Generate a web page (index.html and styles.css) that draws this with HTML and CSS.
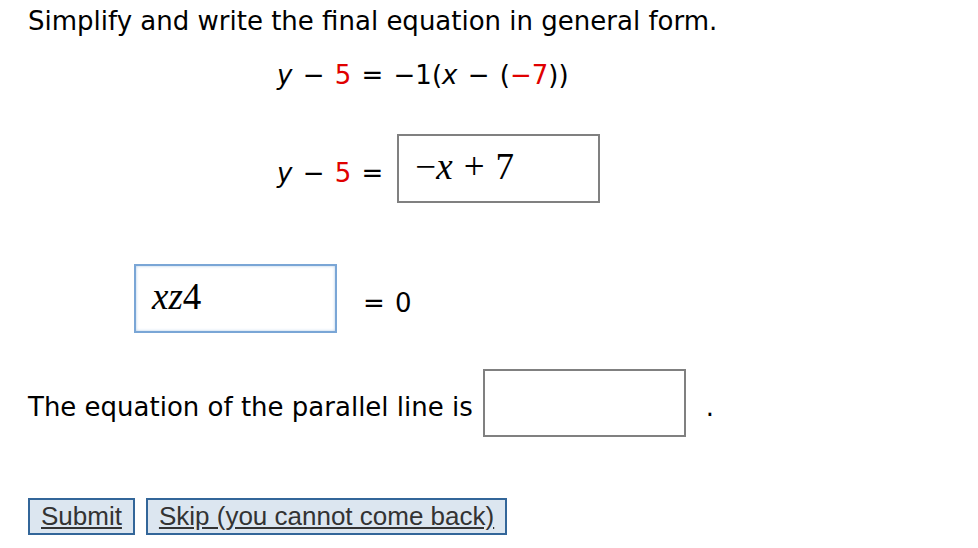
FILE: index.html
```html
<!DOCTYPE html>
<html lang="en">
<head>
  <meta charset="UTF-8">
  <title>Parallel Line</title>
  <link rel="stylesheet" href="styles.css">
</head>
<body>
  <div class="question">
    <p class="prompt">Simplify and write the final equation in general form.</p>

    <div class="eq-given">
      <i>y</i> &minus; <span class="red">5</span> = &minus;1(<i>x</i> &minus; (<span class="red">&minus;7</span>))
    </div>

    <div class="eq eq-step">
      <span class="lhs"><i>y</i> &minus; <span class="red">5</span> =</span>
      <div class="answer-box">
        <span class="math">&minus;<i>x</i><span class="op">+</span>7</span>
      </div>
    </div>

    <div class="eq eq-general">
      <div class="answer-box focused">
        <span class="math"><i>xz</i>4</span>
      </div>
      <span class="rhs">= 0</span>
    </div>

    <div class="eq eq-final">
      <span class="label">The equation of the parallel line is</span>
      <div class="answer-box"></div>
      <span class="dot">.</span>
    </div>

    <div class="buttons">
      <button class="btn">Submit</button>
      <button class="btn">Skip (you cannot come back)</button>
    </div>
  </div>
</body>
</html>
```

FILE: styles.css
```css
body {
  margin: 0;
  background: #ffffff;
  color: #000000;
  font-family: "DejaVu Sans", Verdana, sans-serif;
  font-size: 26px;
}

.question {
  padding: 4px 0 0 28px;
}

.prompt {
  margin: 0;
  line-height: 34px;
}

.red {
  color: #e00000;
}

.eq {
  display: flex;
  align-items: center;
}

.eq-given {
  margin: 22px 0 0 249px;
  line-height: 30px;
  word-spacing: 2px;
}

.eq-step {
  margin: 44px 0 0 249px;
}

.lhs {
  word-spacing: 2px;
  margin: 8px 14px 0 0;
}

.answer-box {
  width: 199px;
  height: 65px;
  border: 2px solid #808080;
  display: flex;
  align-items: center;
}

.math {
  font-family: "Liberation Serif", serif;
  font-size: 37px;
  padding-left: 16px;
  padding-bottom: 4px;
  white-space: nowrap;
}

.math i {
  font-style: italic;
}

.op {
  margin: 0 11px;
}

.answer-box.focused {
  border-color: #7aa6d6;
  box-shadow: inset 0 0 3px rgba(122, 166, 214, 0.6);
}

.eq-general {
  margin: 61px 0 0 106px;
}

.rhs {
  margin: 8px 0 0 26px;
  word-spacing: 2px;
}

.eq-final {
  margin: 36px 0 0 0;
}

.label {
  margin-top: 8px;
}

.eq-final .answer-box {
  height: 64px;
  margin-left: 10px;
}

.dot {
  margin: 8px 0 0 20px;
}

.buttons {
  display: flex;
  gap: 11px;
  margin-top: 61px;
}

.btn {
  font-family: "Liberation Sans", Arial, sans-serif;
  font-size: 26px;
  color: #333333;
  text-decoration: underline;
  background: #dce6f0;
  border: 2px solid #336699;
  padding: 0 11px;
  height: 37px;
  line-height: 33px;
}
```
